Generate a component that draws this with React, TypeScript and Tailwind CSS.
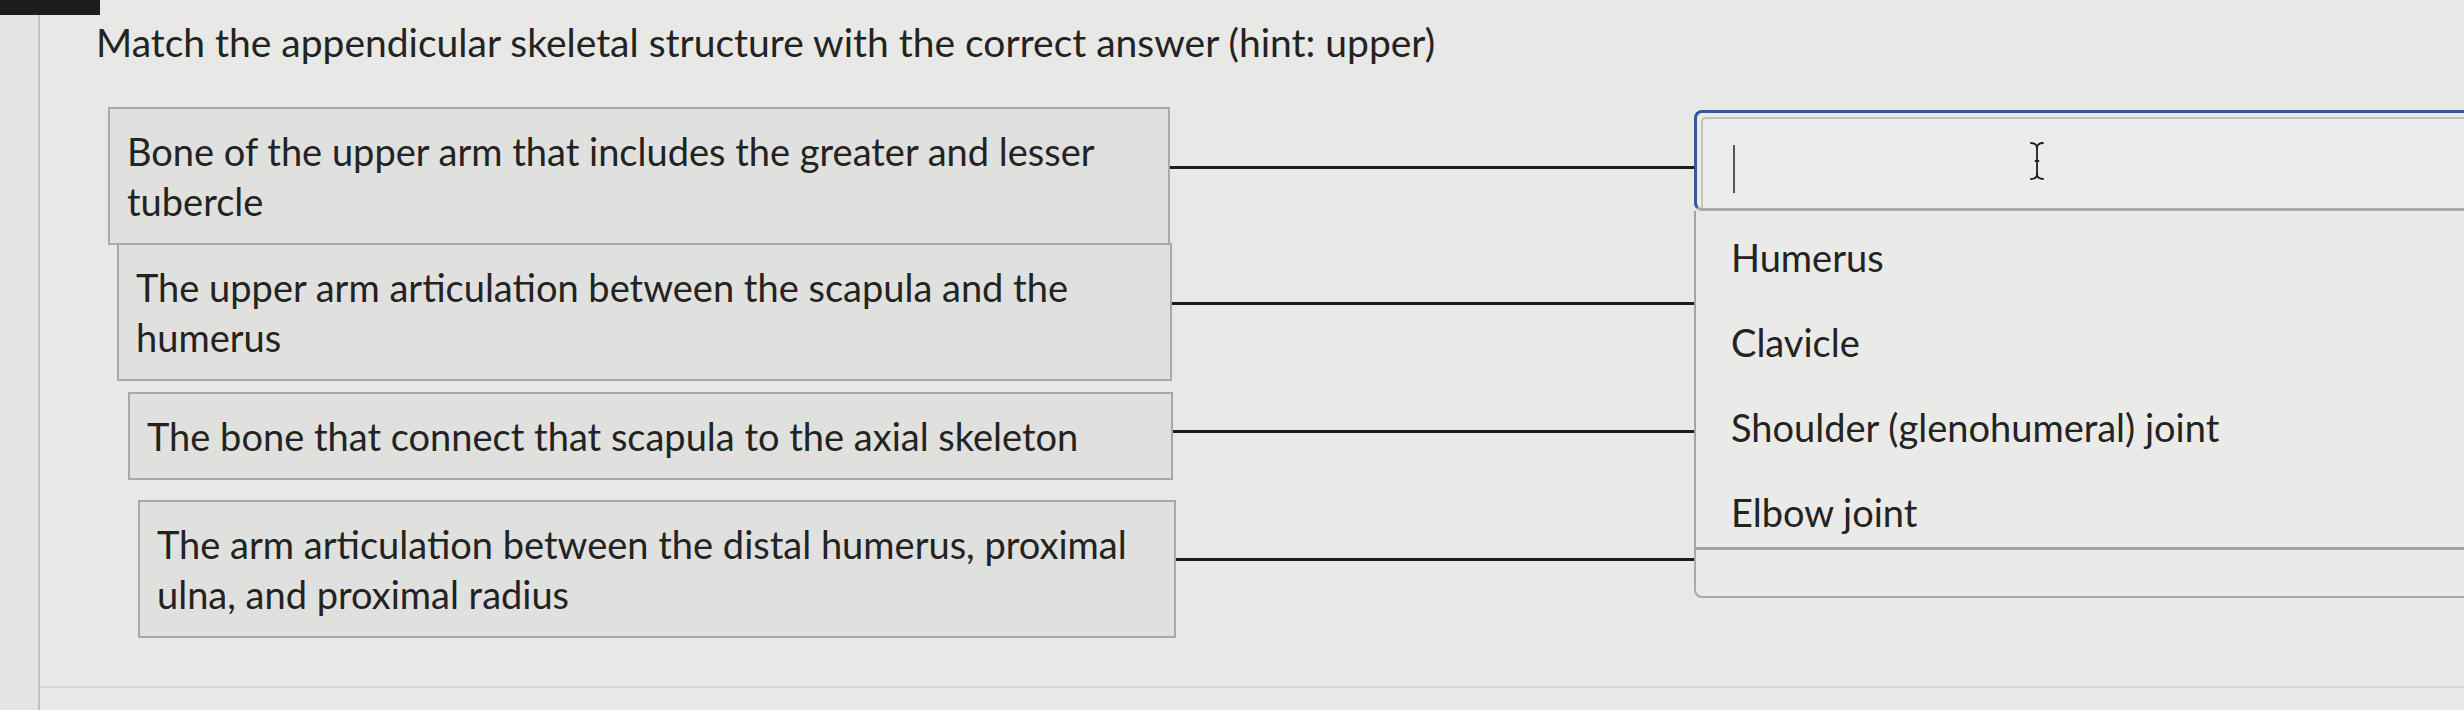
const rows = [
  {
    text: 'Bone of the upper arm that includes the greater and lesser tubercle',
    box: 'ml-[68px] w-[1062px]',
    gap: 'mt-0',
    line: 'mt-[59px]',
    sel: 'top-[15px]',
  },
  {
    text: 'The upper arm articulation between the scapula and the humerus',
    box: 'ml-[77px] w-[1055px]',
    gap: '-mt-[2px]',
    line: 'mt-[59px]',
    sel: 'top-[15px]',
  },
  {
    text: 'The bone that connect that scapula to the axial skeleton',
    box: 'ml-[88px] w-[1045px]',
    gap: 'mt-[11px]',
    line: 'mt-[38px]',
    sel: '-top-[6px]',
  },
  {
    text: 'The arm articulation between the distal humerus, proximal ulna, and proximal radius',
    box: 'ml-[98px] w-[1038px]',
    gap: 'mt-[20px]',
    line: 'mt-[58px]',
    sel: 'top-[14px]',
  },
];

const options = ['Humerus', 'Clavicle', 'Shoulder (glenohumeral) joint', 'Elbow joint'];

const IBeam = () => (
  <svg width="16" height="40" viewBox="0 0 16 40" fill="none" stroke="#1f1f1f" strokeWidth="1.8" strokeLinecap="round">
    <path d="M2 2 C5 2 8 3 8 7" />
    <path d="M14 2 C11 2 8 3 8 7" />
    <path d="M8 7 V33" />
    <path d="M2 38 C5 38 8 37 8 33" />
    <path d="M14 38 C11 38 8 37 8 33" />
    <path d="M6.5 20 H9.5" />
  </svg>
);

export default function App() {
  return (
    <div className="relative flex w-[2464px] h-[710px] overflow-hidden bg-[#e8e8e6] font-['Lato','Open_Sans',sans-serif] text-[#232323]">
      {/* dark strip at the top-left corner */}
      <div className="absolute top-0 left-0 w-[100px] h-[15px] bg-[#1c1c1c]" />

      {/* left gutter */}
      <div className="w-[40px] shrink-0 border-r-2 border-[#c2c2c0] bg-[#e5e5e3]" />

      <div className="flex-1 flex flex-col">
        <h1 className="ml-[56px] mt-[18px] text-[39px] leading-[48px] font-normal">
          Match the appendicular skeletal structure with the correct answer (hint: upper)
        </h1>

        <div className="mt-[41px] flex flex-col">
          {rows.map((row, i) => (
            <div key={i} className={`flex items-start ${row.gap}`}>
              <div
                className={`${row.box} shrink-0 border-2 border-[#a8a8a6] bg-[#e0e0de] px-[17px] py-[17px] text-[38px] leading-[50px]`}
              >
                {row.text}
              </div>

              <div className={`flex-1 h-[3px] bg-[#1c1c1c] ${row.line}`} />

              <div className="w-[790px] shrink-0 -mr-[20px] relative self-stretch">
                {i === 0 ? (
                  <div className="relative mt-[3px]">
                    {/* focused combobox */}
                    <div className="h-[101px] rounded-tl-[8px] rounded-bl-[8px] border-t-[3px] border-l-[3px] border-b-[3px] border-t-[#2c5a9c] border-l-[#2c5a9c] border-b-[#a9a9a7] bg-[#ebebe9] pl-[4px] pt-[4px]">
                      <div className="relative h-full rounded-tl-[5px] border-t-2 border-l-2 border-[#c3c3c1]">
                        <div className="absolute left-[30px] top-[26px] w-[2px] h-[48px] bg-[#555555]" />
                        <div className="absolute left-[326px] top-[22px]">
                          <IBeam />
                        </div>
                      </div>
                    </div>

                    {/* open listbox */}
                    <ul className="absolute z-10 left-0 right-0 top-[101px] h-[339px] border-l-2 border-b-[3px] border-[#a3a3a1] bg-[#eaeae8] pt-[4px]">
                      {options.map((opt) => (
                        <li key={opt} className="h-[85px] flex items-center pl-[35px] text-[38px]">
                          {opt}
                        </li>
                      ))}
                    </ul>
                  </div>
                ) : (
                  <div
                    className={`absolute left-0 right-0 ${row.sel} h-[84px] rounded-[8px] border-2 border-[#a9a9a7] bg-[#e9e9e7]`}
                  />
                )}
              </div>
            </div>
          ))}
        </div>

        <div className="mt-[48px] border-t-2 border-[#d3d3d1]" />
      </div>
    </div>
  );
}
